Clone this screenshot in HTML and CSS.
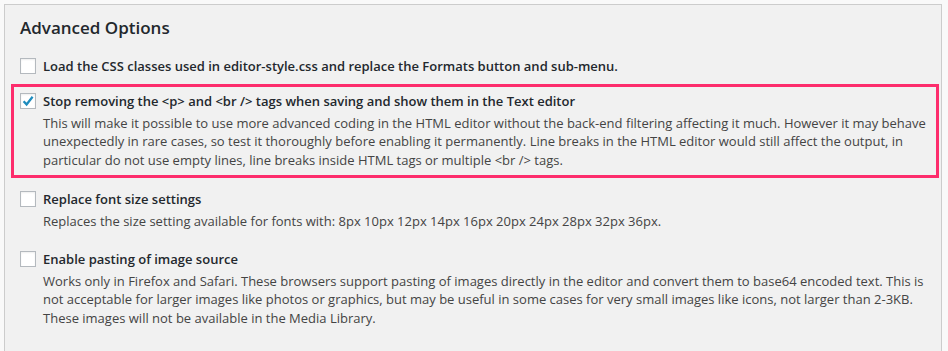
FILE: index.html
```html
<!DOCTYPE html>
<html lang="en">
<head>
  <meta charset="UTF-8" />
  <title>Advanced Options</title>
  <link rel="stylesheet" href="styles.css">
</head>
<body>
  <div class="panel">
    <h3 class="panel-title">Advanced Options</h3>

    <div class="option option-first">
      <span class="check"></span>
      <div class="option-text">
        <div class="option-label">Load the CSS classes used in editor-style.css and replace the Formats button and sub-menu.</div>
      </div>
    </div>

    <div class="highlight">
      <div class="option">
        <span class="check">
          <svg viewBox="0 0 16 16" width="16" height="16"><polyline points="3.6,8.2 6.6,11.4 12.6,3.8" /></svg>
        </span>
        <div class="option-text">
          <div class="option-label">Stop removing the &lt;p&gt; and &lt;br /&gt; tags when saving and show them in the Text editor</div>
          <p class="option-desc">This will make it possible to use more advanced coding in the HTML editor without the back-end filtering affecting it much. However it may behave unexpectedly in rare cases, so test it thoroughly before enabling it permanently. Line breaks in the HTML editor would still affect the output, in particular do not use empty lines, line breaks inside HTML tags or multiple &lt;br /&gt; tags.</p>
        </div>
      </div>
    </div>

    <div class="option">
      <span class="check"></span>
      <div class="option-text">
        <div class="option-label">Replace font size settings</div>
        <p class="option-desc">Replaces the size setting available for fonts with: 8px 10px 12px 14px 16px 20px 24px 28px 32px 36px.</p>
      </div>
    </div>

    <div class="option">
      <span class="check"></span>
      <div class="option-text">
        <div class="option-label">Enable pasting of image source</div>
        <p class="option-desc">Works only in Firefox and Safari. These browsers support pasting of images directly in the editor and convert them to base64 encoded text. This is not acceptable for larger images like photos or graphics, but may be useful in some cases for very small images like icons, not larger than 2-3KB. These images will not be available in the Media Library.</p>
      </div>
    </div>
  </div>
</body>
</html>
```

FILE: styles.css
```css
* {
  box-sizing: border-box;
}

html, body {
  margin: 0;
  padding: 0;
  background: #f9f9f9;
  font-family: 'Open Sans', 'Noto Sans', sans-serif;
  color: #23282d;
}

body {
  padding: 4px;
}

.panel {
  width: 938px;
  background: #f1f1f1;
  border: 1px solid #ccc;
  padding: 12px 11px 24px 15px;
}

.panel-title {
  margin: 0 0 18px;
  font-size: 17px;
  font-weight: 600;
  line-height: 22px;
}

.option {
  display: flex;
  align-items: flex-start;
  gap: 7px;
  margin-bottom: 20px;
}

.option:last-child {
  margin-bottom: 0;
}

.option-first {
  margin-bottom: 9px;
}

/* the screenshot's highlight box */
.highlight {
  margin: 9px -9px 12px;
  padding: 5px 6px 6px;
  border: 3px solid #fd2d6c;
}

.highlight .option {
  margin-bottom: 0;
}

.check {
  flex: none;
  width: 16px;
  height: 16px;
  margin-top: 1px;
  background: #fff;
  border: 1px solid #b4b9be;
  box-shadow: inset 0 1px 2px rgba(0, 0, 0, 0.07);
  position: relative;
}

.check svg {
  position: absolute;
  left: -1px;
  top: -1px;
  fill: none;
  stroke: #1e8cbe;
  stroke-width: 2.3;
}

.option-text {
  flex: 1;
}

.option-label {
  font-size: 13px;
  font-weight: 600;
  line-height: 18px;
}

.option-desc {
  margin: 4px 0 0;
  font-size: 13px;
  line-height: 18.3px;
  color: #444;
}
```
